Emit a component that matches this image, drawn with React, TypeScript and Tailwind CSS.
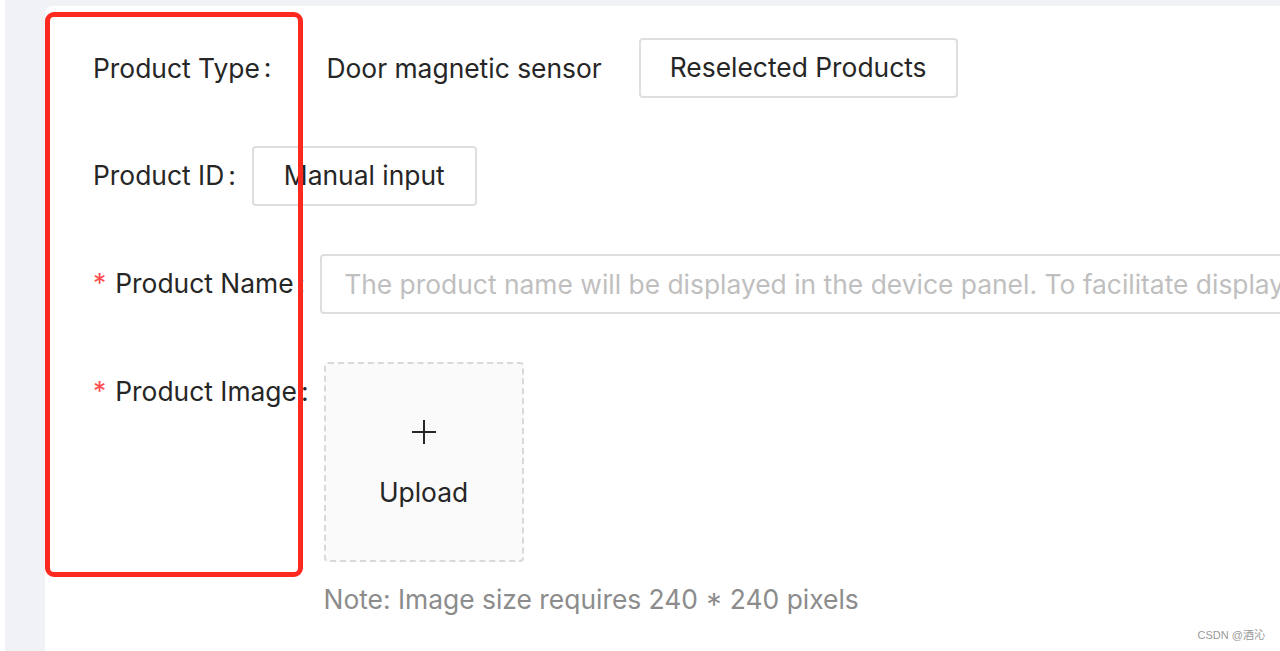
import React from "react";

const font = { fontFamily: "Inter, 'Noto Sans', sans-serif" };

function Colon() {
  return <span className="ml-[4px] mr-[15px]">:</span>;
}

function Required() {
  return <span className="mr-[9px] text-[#ff4d4f]">*</span>;
}

export default function App() {
  return (
    <div
      className="h-[651px] w-full overflow-hidden bg-white pl-[5px] text-[26.4px] text-[#262626]"
      style={font}
    >
      <div className="h-full bg-[#f0f2f5] pl-[40px] pt-[6px]">
        <div className="relative h-full rounded-tl-[8px] bg-white pl-[48px] pt-[32px]">
          <div className="flex flex-col gap-[48px]">
            {/* product type */}
            <div className="flex h-[60px] items-center whitespace-nowrap">
              <span className="translate-y-[1px]">Product Type</span>
              <Colon />
              <span className="ml-[40px] translate-y-[1px]">Door magnetic sensor</span>
              <button className="ml-[37px] h-[60px] rounded-[4px] border-2 border-[#dedede] bg-white px-[29px]">
                Reselected Products
              </button>
            </div>

            {/* product id */}
            <div className="flex h-[60px] items-center whitespace-nowrap">
              <span>Product ID</span>
              <Colon />
              <button className="ml-[1px] h-[60px] rounded-[4px] border-2 border-[#dedede] bg-white px-[30px]">
                Manual input
              </button>
            </div>

            {/* product name */}
            <div className="flex h-[60px] items-center whitespace-nowrap">
              <Required />
              <span>Product Name</span>
              <Colon />
              <input
                readOnly
                placeholder="The product name will be displayed in the device panel. To facilitate display, please keep it short"
                className="h-[60px] w-[1100px] shrink-0 rounded-[4px] border-2 border-[#dedede] px-[22px] outline-none placeholder:text-[#bfbfbf]"
              />
            </div>

            {/* product image */}
            <div className="flex items-start whitespace-nowrap">
              <div className="flex h-[60px] items-center">
                <Required />
                <span>Product Image</span>
                <Colon />
              </div>
              <div className="flex flex-col">
                <div className="flex h-[200px] w-[200px] flex-col items-center justify-center rounded-[4px] border-2 border-dashed border-[#d9d9d9] bg-[#fafafa]">
                  <svg width="26" height="26" viewBox="0 0 26 26" className="mb-[28px] mt-[6px]">
                    <path d="M13 1v24M1 13h24" stroke="#262626" strokeWidth="2" fill="none" />
                  </svg>
                  <span className="leading-[39px]">Upload</span>
                </div>
                <p className="mt-[18px] text-[#8c8c8c]">Note: Image size requires 240 * 240 pixels</p>
              </div>
            </div>
          </div>

          {/* annotation overlay */}
          <div className="pointer-events-none absolute left-0 top-[6px] h-[565px] w-[258px] rounded-[9px] border-[5px] border-[#ff2a1f]" />

          <span
            className="absolute bottom-[8px] right-[15px] text-[11px] text-[#999]"
            style={{ fontFamily: "'Liberation Sans', 'Noto Sans CJK SC', sans-serif" }}
          >
            CSDN @酒沁
          </span>
        </div>
      </div>
    </div>
  );
}
